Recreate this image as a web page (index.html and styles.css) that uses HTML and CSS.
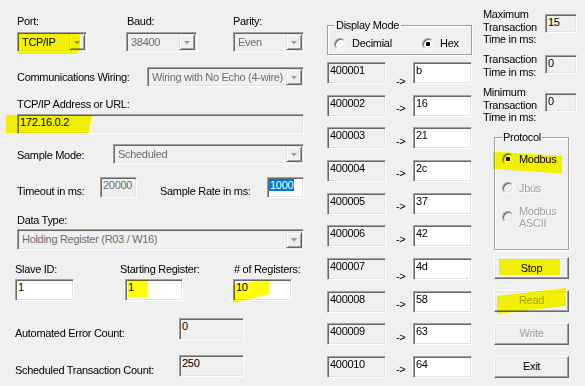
FILE: index.html
```html
<!DOCTYPE html>
<html lang="en">

<head>
    <meta charset="utf-8">
    <title>Modbus Scanner</title>
    <link rel="stylesheet" href="styles.css">
</head>

<body>
    <div class="window">
        <!-- left: connection settings -->
        <div class="col-left">
            <div class="row-ports">
                <div class="field field-port">
                    <div class="label">Port:</div>
                    <div class="combo enabled">
                        <span class="combo-text">TCP/IP</span>
                        <span class="combo-btn"></span>
                        <span class="mark mark-port"></span>
                    </div>
                </div>
                <div class="field field-baud">
                    <div class="label">Baud:</div>
                    <div class="combo">
                        <span class="combo-text">38400</span>
                        <span class="combo-btn"></span>
                    </div>
                </div>
                <div class="field field-parity">
                    <div class="label">Parity:</div>
                    <div class="combo">
                        <span class="combo-text">Even</span>
                        <span class="combo-btn"></span>
                    </div>
                </div>
            </div>

            <div class="row-inline row-wiring">
                <div class="label">Communications Wiring:</div>
                <div class="combo combo-wiring">
                    <span class="combo-text">Wiring with No Echo (4-wire)</span>
                    <span class="combo-btn"></span>
                </div>
            </div>

            <div class="label label-ip">TCP/IP Address or URL:</div>
            <div class="edit edit-ip ro">
                172.16.0.2
                <span class="mark mark-ip"></span>
            </div>

            <div class="row-inline row-mode">
                <div class="label">Sample Mode:</div>
                <div class="combo combo-mode">
                    <span class="combo-text">Scheduled</span>
                    <span class="combo-btn"></span>
                </div>
            </div>

            <div class="row-timing">
                <div class="label lbl-timeout">Timeout in ms:</div>
                <div class="edit edit-small ro disabled">20000</div>
                <div class="label lbl-rate">Sample Rate in ms:</div>
                <div class="edit edit-small edit-rate"><span class="selected">1000</span></div>
            </div>

            <div class="label label-type">Data Type:</div>
            <div class="combo combo-type">
                <span class="combo-text">Holding Register (R03 / W16)</span>
                <span class="combo-btn"></span>
            </div>

            <div class="row-regs">
                <div class="field field-slave">
                    <div class="label">Slave ID:</div>
                    <div class="edit edit-reg">1</div>
                </div>
                <div class="field field-start">
                    <div class="label">Starting Register:</div>
                    <div class="edit edit-reg">
                        1
                        <span class="mark mark-start"></span>
                    </div>
                </div>
                <div class="field field-count">
                    <div class="label">#&nbsp;of Registers:</div>
                    <div class="edit edit-reg">
                        10
                        <span class="mark mark-count"></span>
                    </div>
                </div>
            </div>

            <div class="row-count">
                <div class="label lbl-count">Automated Error Count:</div>
                <div class="edit edit-count ro">0</div>
            </div>
            <div class="row-count row-count2">
                <div class="label lbl-count">Scheduled Transaction Count:</div>
                <div class="edit edit-count ro">250</div>
            </div>
        </div>

        <!-- middle: register values -->
        <div class="col-mid">
            <fieldset class="group group-display">
                <legend>Display Mode</legend>
                <div class="radio-row">
                    <div class="radio-item radio-dec"><span class="radio"></span>Decimial</div>
                    <div class="radio-item"><span class="radio checked"></span>Hex</div>
                </div>
            </fieldset>

            <div class="regs">
                <div class="reg low"><div class="edit addr ro">400001</div><span class="arrow">-&gt;</span><div class="edit val">b</div></div>
                <div class="reg"><div class="edit addr ro">400002</div><span class="arrow">-&gt;</span><div class="edit val">16</div></div>
                <div class="reg"><div class="edit addr ro">400003</div><span class="arrow">-&gt;</span><div class="edit val">21</div></div>
                <div class="reg"><div class="edit addr ro">400004</div><span class="arrow">-&gt;</span><div class="edit val">2c</div></div>
                <div class="reg"><div class="edit addr ro">400005</div><span class="arrow">-&gt;</span><div class="edit val">37</div></div>
                <div class="reg"><div class="edit addr ro">400006</div><span class="arrow">-&gt;</span><div class="edit val">42</div></div>
                <div class="reg low"><div class="edit addr ro">400007</div><span class="arrow">-&gt;</span><div class="edit val">4d</div></div>
                <div class="reg"><div class="edit addr ro">400008</div><span class="arrow">-&gt;</span><div class="edit val">58</div></div>
                <div class="reg"><div class="edit addr ro">400009</div><span class="arrow">-&gt;</span><div class="edit val">63</div></div>
                <div class="reg"><div class="edit addr ro">400010</div><span class="arrow">-&gt;</span><div class="edit val">64</div></div>
            </div>
        </div>

        <!-- right: timings, protocol, buttons -->
        <div class="col-right">
            <div class="time-group tg1">
                <div class="time-label">Maximum<br>Transaction<br>Time in ms:</div>
                <div class="edit time-box ro">15</div>
            </div>
            <div class="time-group tg2">
                <div class="time-label">Transaction<br>Time in ms:</div>
                <div class="edit time-box ro">0</div>
            </div>
            <div class="time-group tg3">
                <div class="time-label">Minimum<br>Transaction<br>Time in ms:</div>
                <div class="edit time-box ro">0</div>
            </div>

            <fieldset class="group group-protocol">
                <legend>Protocol</legend>
                <div class="radio-item proto-modbus">
                    <span class="radio checked"></span>Modbus
                    <span class="mark mark-modbus"></span>
                </div>
                <div class="radio-item proto-jbus disabled"><span class="radio off"></span>Jbus</div>
                <div class="radio-item proto-ascii disabled"><span class="radio off"></span>Modbus<br>ASCII</div>
            </fieldset>

            <div class="buttons">
                <div class="btn">Stop<span class="mark mark-stop"></span></div>
                <div class="btn disabled">Read<span class="mark mark-read"></span></div>
                <div class="btn disabled">Write</div>
                <div class="btn">Exit</div>
            </div>
        </div>
    </div>
</body>

</html>
```

FILE: styles.css
```css
html, body {
    margin: 0;
}

body {
    width: 585px;
    height: 386px;
    overflow: hidden;
    background-color: #F0F0F0;
    font-family: "Liberation Sans", Arial, sans-serif;
    font-size: 11px;
    line-height: 13px;
    letter-spacing: -0.3px;
    color: #000;
}

.window {
    display: flex;
}

.label {
    white-space: nowrap;
}

.col-left {
    width: 287px;
    margin-left: 17px;
    padding-top: 15px;
}

.col-mid {
    width: 145px;
    margin-left: 23px;
    padding-top: 19px;
}

.col-right {
    width: 94px;
    margin-left: 11px;
    padding-top: 8px;
}

.disabled {
    color: #A0A0A0;
    text-shadow: 1px 1px 0 #FFF;
}

/* sunken 3d edge, used by edits and combos */
.edit, .combo {
    position: relative;
    box-sizing: border-box;
    border: 1px solid;
    border-color: #A0A0A0 #FFF #FFF #A0A0A0;
    box-shadow: inset 1px 1px 0 #696969, inset -1px -1px 0 #E3E3E3;
    background-color: #FFF;
}

.edit {
    padding: 1px 2px 0 2px;
    white-space: nowrap;
}

.edit.ro {
    background-color: #F0F0F0;
}

.edit.disabled {
    color: #6D6D6D;
    text-shadow: none;
}

.combo {
    display: flex;
    justify-content: space-between;
    align-items: center;
    height: 20px;
    padding: 1px;
    background-color: #F0F0F0;
    color: #6D6D6D;
    white-space: nowrap;
}

.combo.enabled {
    color: #000;
}

.combo-text {
    padding-left: 3px;
    overflow: hidden;
}

.combo-btn {
    display: flex;
    justify-content: center;
    align-items: center;
    flex: none;
    box-sizing: border-box;
    width: 16px;
    height: 16px;
    border: 1px solid;
    border-color: #E3E3E3 #696969 #696969 #E3E3E3;
    box-shadow: inset 1px 1px 0 #FFF, inset -1px -1px 0 #A0A0A0;
    background-color: #F0F0F0;
}

.combo-btn::after {
    content: "";
    width: 7px;
    height: 4px;
    margin-top: 1px;
    background-color: #A0A0A0;
    clip-path: polygon(0 0, 100% 0, 50% 100%);
}

/* yellow highlighter strokes over the screenshot */
.mark {
    position: absolute;
    background-color: #FFFF00;
    mix-blend-mode: multiply;
    pointer-events: none;
}

.mark-port {
    left: 0;
    top: 0;
    width: 62px;
    height: 21px;
    border-radius: 2px 4px 6px 2px;
}

.mark-ip {
    left: -12px;
    top: 0;
    width: 86px;
    height: 18px;
    clip-path: polygon(0 0, 100% 0, 96% 100%, 0 100%);
}

.mark-start {
    left: 2px;
    top: 0;
    width: 20px;
    height: 17px;
}

.mark-count {
    left: -1px;
    top: 0;
    width: 36px;
    height: 23px;
    clip-path: polygon(0 18%, 100% 0, 100% 62%, 0 100%);
}

.mark-modbus {
    left: -9px;
    top: -1px;
    width: 69px;
    height: 22px;
    clip-path: polygon(0 0, 100% 20%, 100% 100%, 0 80%);
}

.mark-stop {
    left: 4px;
    top: 1px;
    width: 61px;
    height: 16px;
}

.mark-read {
    left: 2px;
    top: -3px;
    width: 69px;
    height: 26px;
    clip-path: polygon(0 31%, 100% 0, 100% 69%, 0 100%);
}

/* left column rows */
.row-ports {
    display: flex;
}

.field .combo {
    margin-top: 4px;
}

.field-port {
    width: 70px;
}

.field-baud {
    width: 71px;
    margin-left: 39px;
}

.field-baud .label {
    padding-left: 1px;
}

.field-parity {
    width: 71px;
    margin-left: 36px;
}

.row-inline {
    display: flex;
    justify-content: space-between;
    align-items: center;
}

.row-wiring {
    margin-top: 15px;
}

.combo-wiring {
    width: 157px;
}

.label-ip {
    margin-top: 11px;
}

.edit-ip {
    height: 20px;
    margin-top: 3px;
}

.row-mode {
    margin-top: 10px;
}

.row-mode .label {
    margin-top: 3px;
}

.combo-mode {
    width: 191px;
}

.row-timing {
    display: flex;
    align-items: flex-end;
    margin-top: 13px;
}

.lbl-timeout {
    width: 83px;
}

.lbl-rate {
    width: 107px;
    margin-left: 23px;
}

.edit-small {
    width: 37px;
    height: 21px;
}

.edit-rate {
    padding-left: 1px;
}

.selected {
    background-color: #0078D7;
    color: #FFF;
    padding: 0 1px;
}

.label-type {
    margin-top: 16px;
}

.combo-type {
    height: 21px;
    margin-top: 2px;
}

.row-regs {
    display: flex;
    margin-top: 13px;
    margin-left: -2px;
}

.edit-reg {
    height: 22px;
    margin-top: 3px;
}

.field-slave {
    width: 59px;
}

.field-start {
    width: 63px;
    margin-left: 46px;
}

.field-start .edit-reg {
    width: 58px;
    margin-left: 5px;
}

.field-count {
    width: 59px;
    margin-left: 50px;
}

.field-count .label {
    padding-left: 1px;
}

.row-count {
    display: flex;
    align-items: flex-end;
    margin-top: 17px;
    margin-left: -2px;
}

.row-count2 {
    margin-top: 15px;
}

.lbl-count {
    width: 164px;
}

.edit-count {
    width: 65px;
    height: 22px;
}

/* group boxes */
.group {
    margin: 0;
    border: 1px solid #A0A0A0;
    box-shadow: inset 1px 1px 0 #FFF, 1px 1px 0 #FFF;
}

.group legend {
    padding: 0 2px;
    line-height: 13px;
}

.group-display {
    padding: 5px 0 4px 6px;
}

.radio-row {
    display: flex;
}

.radio-item {
    position: relative;
    display: flex;
    align-items: center;
}

.radio-dec {
    width: 88px;
}

.radio {
    flex: none;
    box-sizing: border-box;
    width: 12px;
    height: 12px;
    margin-right: 6px;
    border: 1px solid;
    border-color: #A0A0A0 #FFF #FFF #A0A0A0;
    border-radius: 50%;
    box-shadow: inset 1px 1px 0 #696969, inset -1px -1px 0 #E3E3E3;
    background-color: #FFF;
}

.radio.checked {
    background: radial-gradient(circle, #000 0 2px, #FFF 2.5px);
}

.radio.off {
    background-color: #F0F0F0;
}

/* register table */
.regs {
    display: flex;
    flex-direction: column;
    gap: 10.67px;
    margin-top: 7px;
}

.reg {
    display: flex;
    align-items: center;
    height: 22px;
}

.reg .edit {
    width: 59px;
    height: 22px;
}

.arrow {
    box-sizing: border-box;
    width: 27px;
    padding-left: 10px;
    padding-top: 6px;
}

.reg.low .arrow {
    padding-top: 16px;
}

/* right column */
.time-group {
    display: flex;
    justify-content: space-between;
    align-items: flex-start;
}

.time-label {
    line-height: 12.5px;
}

.time-box {
    width: 32px;
    height: 19px;
}

.tg1 .time-box {
    margin-top: 6px;
}

.tg2 {
    margin-top: 7.5px;
}

.tg2 .time-box {
    margin-top: 2px;
}

.tg3 {
    margin-top: 8px;
}

.tg3 .time-box {
    margin-top: 7px;
}

.group-protocol {
    box-sizing: border-box;
    width: 75px;
    margin-top: 7px;
    margin-left: 11px;
    padding: 9px 0 19.5px 7px;
}

.group-protocol legend {
    padding: 0 1px;
}

.group-protocol .radio {
    margin-right: 5px;
}

.proto-jbus {
    margin-top: 16px;
}

.proto-ascii {
    margin-top: 10px;
    line-height: 12.5px;
}

.buttons {
    display: flex;
    flex-direction: column;
    gap: 10.9px;
    margin-top: 7px;
    margin-left: 11px;
}

.btn {
    position: relative;
    display: flex;
    justify-content: center;
    align-items: center;
    box-sizing: border-box;
    width: 75px;
    height: 22px;
    border: 1px solid;
    border-color: #FFF #696969 #696969 #FFF;
    box-shadow: inset -1px -1px 0 #A0A0A0, inset 1px 1px 0 #E3E3E3;
    background-color: #F0F0F0;
}
```
